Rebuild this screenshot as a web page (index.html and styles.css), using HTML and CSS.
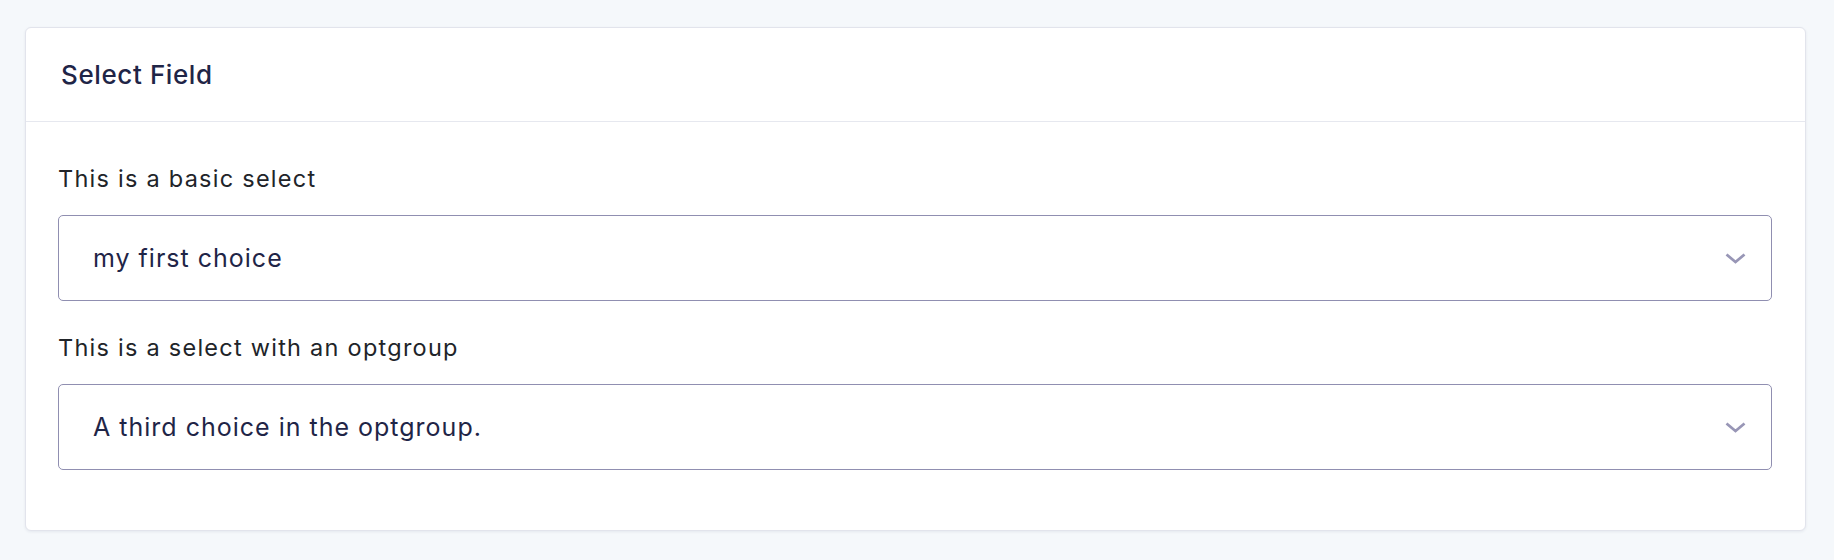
FILE: index.html
```html
<!DOCTYPE html>
<html lang="en">
<head>
<meta charset="utf-8">
<title>Select Field</title>
<link rel="stylesheet" href="styles.css">
</head>
<body>
<div class="card">
  <div class="card-header">Select Field</div>
  <div class="card-body">
    <div class="field">
      <label class="field-label">This is a basic select</label>
      <div class="select">
        <span class="select-value">my first choice</span>
        <svg class="chevron" viewBox="0 0 21 11" width="21" height="11"><path d="M1.5 1.5 L10.5 9 L19.5 1.5" fill="none" stroke="#9896b6" stroke-width="2.8" stroke-linecap="butt" stroke-linejoin="miter"/></svg>
      </div>
    </div>
    <div class="field">
      <label class="field-label">This is a select with an optgroup</label>
      <div class="select">
        <span class="select-value">A third choice in the optgroup.</span>
        <svg class="chevron" viewBox="0 0 21 11" width="21" height="11"><path d="M1.5 1.5 L10.5 9 L19.5 1.5" fill="none" stroke="#9896b6" stroke-width="2.8" stroke-linecap="butt" stroke-linejoin="miter"/></svg>
      </div>
    </div>
  </div>
</div>
</body>
</html>
```

FILE: styles.css
```css
html, body {
  margin: 0;
  padding: 0;
}
body {
  background: #f5f8fb;
  padding: 27px 28px 30px 25px;
  font-family: Inter, "Noto Sans", sans-serif;
}
.card {
  background: #ffffff;
  border: 1px solid #e2e4ec;
  border-radius: 6px;
  box-shadow: 0 1px 3px rgba(40, 50, 90, 0.08);
}
.card-header {
  height: 93px;
  display: flex;
  align-items: center;
  padding-left: 35px;
  font-size: 26px;
  letter-spacing: 0.6px;
  font-weight: 500;
  color: #1f2547;
  border-bottom: 1px solid #e6e8ef;
}
.card-body {
  padding: 40px 33px 60px 32px;
  display: flex;
  flex-direction: column;
  gap: 30px;
}
.field {
  display: flex;
  flex-direction: column;
  gap: 20px;
}
.field-label {
  font-size: 23.5px;
  letter-spacing: 1.25px;
  line-height: 33px;
  color: #212429;
}
.select {
  height: 86px;
  box-sizing: border-box;
  border: 1.5px solid #908fb1;
  border-radius: 5px;
  display: flex;
  align-items: center;
  justify-content: space-between;
  padding: 0 25px 0 34px;
}
.select-value {
  font-size: 25px;
  letter-spacing: 1px;
  color: #1f2547;
}
.chevron {
  display: block;
}
```
